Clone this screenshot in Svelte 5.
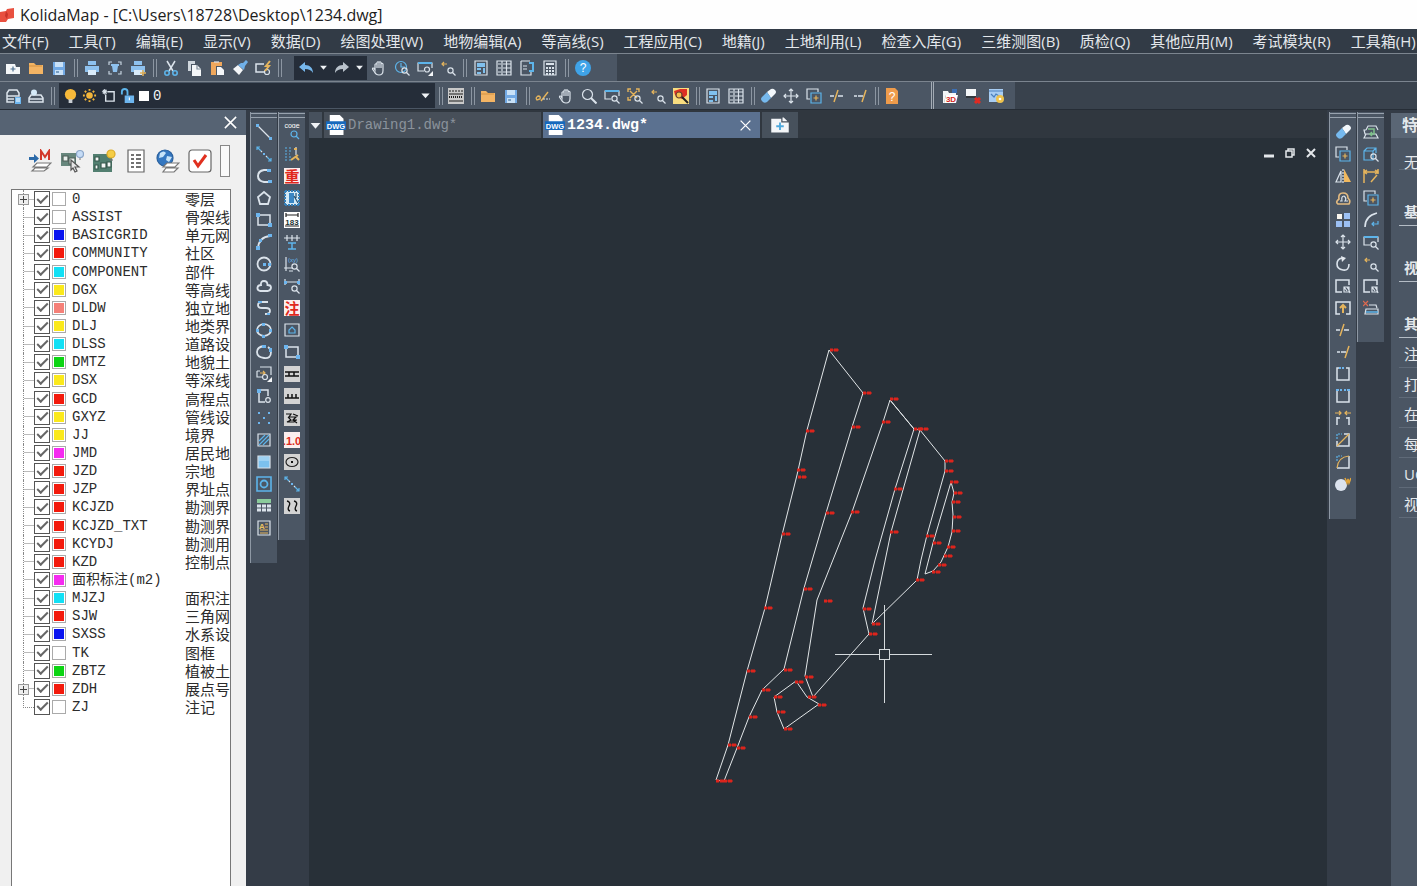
<script>
  const blue = 'stroke="#5db4ea"';
  const gold = 'stroke="#e5b45c"';
  const fillBlue = 'fill="#6db5ee" stroke="none"';
  const fillWhite = 'fill="#f4f6f8" stroke="none"';
  const lens = '<circle cx="10.5" cy="10.5" r="2.6"/><path d="M12.5 12.5L15.5 15.5"/>';
  const printer = '<path fill="#8ec1ee" stroke="none" d="M4 1h8v4H4zM1 6h14v6h-3v-2H4v2H1z"/><path fill="#d9ebfa" stroke="none" d="M4 10h8v5H4z"/>';
  const tile = '<path fill="#d3d3d3" stroke="none" d="M0 0h16v16H0z"/>';
  const redTile = '<path fill="#fbeeee" stroke="none" d="M0 0h16v16H0z"/>';

  // every drawing sits in a 16 x 16 box unless it is one of the layer panel icons
  const icons = {
    new: `<path ${fillWhite} d="M1 4h9l1 3h4V4h-4l4 0v10H1z"/><path stroke="#4d6f8e" d="M8 6.500v5M5.500 9h5"/>`,
    newTab: `<path ${fillWhite} d="M1 3h8v3h6v8H1zM10 2h1l3 3h-4z"/><path stroke="#4fa9dc" stroke-width="1.500" d="M8 6v6M5 9h6"/>`,
    open: '<path fill="#f3b464" stroke="none" d="M1 3h5l2 2h7v9H1z"/><path stroke="#d99849" d="M1 6h13"/>',
    save: '<path fill="#72a9e4" stroke="none" d="M2 2h12v13H2z"/><path fill="#c9e1f7" stroke="none" d="M4 2h8v5H4zM4 10h8v5H4z"/><path stroke="#3e709d" d="M5 12h3"/>',
    print: printer,
    preview: '<path stroke="#c5d3df" d="M2 5V2h3M11 2h3v3M14 11v3h-3M5 14H2v-3"/><path fill="#8ec1ee" stroke="none" d="M4 4h8v2h-1l-1 6H6L5 6H4z"/>',
    plot: printer + `<path ${gold} stroke-width="1.500" d="M13 10v6M10 13h6"/>`,
    cut: `<path stroke-width="1.500" d="M4 1l6 10M12 1L6 11"/><circle ${blue} stroke-width="1.600" cx="4" cy="13" r="2.200"/><circle ${blue} stroke-width="1.600" cx="12" cy="13" r="2.200"/>`,
    copy: `<path fill="#cfd6dd" stroke="none" d="M2 1h7v3H5v7H2z"/><path ${fillWhite} d="M6 5h5l4 4v7H6z"/><path stroke="#7f8c99" d="M11 5v4h4"/>`,
    paste: `<path fill="#efa75c" stroke="none" d="M2 2h11v4H7v9H2z"/><path ${fillWhite} d="M8 7h4l3 3v5H8z"/><path d="M5 2h5"/>`,
    brush: `<path ${fillWhite} d="M1 9l5-4 5 5-4 5z"/><path fill="#70b1ea" stroke="none" d="M6 5l3-2 2 0 3-3 2 2-3 4-1 4z"/>`,
    edit: `<path stroke-width="1.500" d="M9 4H1v8h8"/><circle cx="12" cy="12" r="2.500"/><path ${gold} stroke-width="2" d="M15 1l-4 5h3l-4 5"/>`,
    undo: '<path fill="#76b7ec" stroke="none" d="M1 7l6-5v3c5 0 8 3 8 8-2-3-4-4-8-4v3z"/>',
    redo: '<path fill="#b9c2cb" stroke="none" d="M15 7L9 2v3c-5 0-8 3-8 8 2-3 4-4 8-4v3z"/>',
    down: '<path fill="#f0f3f6" stroke="none" d="M2 5h12l-6 7z"/>',
    hand: '<path d="M4 10V4.500q1-1.500 2 0V8V2.500q1-1.500 2 0V8V2.500q1-1.500 2 0V8V4q1-1.300 2 0v6.500Q12 15 8 15 5 15 3.500 12L1.500 9q0-1.500 1.500-.8z"/>',
    zoomRt: `<circle ${blue} cx="7" cy="7" r="5.500"/><path ${blue} d="M7 3v4h4"/>` + lens,
    zoomWin: `<path d="M7 11H1V3h14v5"/><path ${blue} stroke-width="2" d="M1 3h14"/><circle cx="10" cy="9.500" r="2.500"/><path ${fillWhite} d="M16 11v5h-5z"/>`,
    zoomWin2: `<path d="M7 11H1V3h14v5"/><path ${blue} stroke-width="2" d="M1 3h14"/>` + lens,
    zoomPrev: `<path ${gold} d="M7 4H2M4 2L2 4l2 2"/>` + lens,
    zoomAll: `<path ${gold} stroke-width="1.400" d="M3 3l7 7M10 3l-7 7M1 4V1h3M9 1h3v3M1 9v3h3"/>` + lens,
    palette: '<path d="M2 1h12v14H2z"/><path fill="#80c0ed" stroke="none" d="M4 3h8v4H4zM4 8h4v2H4zM10 8h2v5h-2zM4 12h4v2H4z"/>',
    grid: '<path d="M1 1h14v14H1zM6 1v14M10.500 1v14M2 4h3M2 8h3M2 12h3M7 4h8M7 8h8M7 12h8"/>',
    sheet: `<path d="M2 1h9M2 1v14h10v-3"/><path ${blue} stroke-width="2" d="M10 3h4v8h-4"/><path d="M4 6h4M4 9h4"/>`,
    calc: '<path d="M2 1h12v14H2z"/><path stroke-width="2" d="M4 4h8"/><path stroke-width="2" stroke-dasharray="2 1" d="M4 8h8M4 11h8M4 14h8"/>',
    help: '<circle fill="#3fa3e8" stroke="none" cx="8" cy="8" r="8"/><text x="8" y="12" font-size="12" text-anchor="middle" fill="#fff" stroke="none">?</text>',
    layers: `<path stroke-width="1.500" d="M2 5l2-3h8l2 3v3H2zM2 8v3h7M2 11v3h7"/><path ${fillBlue} d="M10 9h6v7h-6z"/><path stroke="#fff" d="M11 11h4M11 13h4"/>`,
    layerPrev: `<path stroke-width="1.500" d="M3 7h10l2 3v4H1v-4zM1 11h14"/><circle fill="#d5e9f7" stroke="none" cx="6" cy="4.500" r="3"/>`,
    linetype: '<path fill="#c9c9c9" stroke="none" d="M0 0h16v16H0z"/><path stroke="#1d1d1d" stroke-dasharray="2 1" d="M1 3h14"/><path stroke="#1d1d1d" d="M1 6h14M1 13h14"/><path stroke="#1d1d1d" stroke-dasharray="1 1" stroke-width="2" d="M1 9h14"/>',
    snap: `<path ${gold} stroke-width="1.400" d="M6 13L13 4M2 12q-2-2 1-4 3 0 2 3z"/><path stroke-dasharray="2 1" d="M8 11h7"/>`,
    zoom: '<circle cx="6.500" cy="6.500" r="5"/><path stroke-width="2" d="M10 10l5.500 5.500"/>',
    zoomMap: '<path fill="#f8dd80" stroke="none" d="M0 0h16v16H0z"/><path fill="#dd3024" stroke="none" d="M1 3l6-2 7 0 0 6-5 4-7-4z"/><circle fill="#f6c14d" stroke="#6b4030" cx="6" cy="7" r="3"/><path stroke="#222" stroke-width="2" d="M9 9l6 6"/>',
    eraser: '<path fill="#f2f7fb" stroke="none" d="M7 4l4-3q2-1 4 1t0 4l-4 4z"/><path fill="#76b9ee" stroke="none" d="M7 4L2 9q-2 2 0 4 2 3 5 1l4-4z"/>',
    move: '<path d="M8 1v14M1 8h14M6 3l2-2 2 2M6 13l2 2 2-2M3 6L1 8l2 2M13 6l2 2-2 2"/>',
    copyObj: `<path d="M4 11H1V1h11v3"/><path ${blue} d="M5 5h10v10H5z"/><path ${gold} d="M10 7.500v5M7.500 10h5"/>`,
    trim: `<path ${gold} stroke-width="1.500" d="M5 14L9 2"/><path stroke-width="1.500" d="M1 8h4M9 8h5"/>`,
    extend: `<path ${gold} stroke-width="1.500" d="M10 14l4-12"/><path stroke-width="1.500" d="M2 8h3M6 8h5"/>`,
    helpDoc: '<path fill="#ee9b4b" stroke="none" d="M2 0h9l3 3v13H2z"/><text x="8" y="13" font-size="12" text-anchor="middle" fill="#fff" stroke="none">?</text>',
    open3d: `<path ${fillWhite} d="M1 3h5l1 2h7v2H4l-2 8H1z"/><path fill="#3c6fb3" stroke="none" d="M10 1h5v4h-5z"/><path fill="#fff" stroke="none" d="M4 7h12l-2 8H2z"/><text x="9" y="14" font-size="8" font-weight="bold" text-anchor="middle" fill="#d4271e" stroke="none">3D</text>`,
    close3d: `<path ${fillWhite} d="M1 1h10v7H1z"/><path stroke="#222" d="M1 9h10"/><path stroke="#e02a22" stroke-width="3" d="M10 10l5 5M15 10l-5 5"/>`,
    set3d: '<path fill="#a8cdf3" stroke="none" d="M1 1h14v13H1z"/><path stroke="#4b80bd" d="M1 3h14M3 6l3 3 2-3 3 2"/><circle fill="#efc34e" stroke="none" cx="12" cy="11" r="4"/><circle fill="#fff" stroke="none" cx="12" cy="11" r="1.300"/>',
    bulb: '<circle fill="#f6b93a" stroke="none" cx="8" cy="7" r="6"/><path fill="#c9ced3" stroke="none" d="M6 12h4v4H6z"/>',
    sun: '<circle fill="#f2b53a" stroke="none" cx="8" cy="8" r="3.500"/><path stroke="#f2b53a" stroke-width="2" d="M8 1v2M8 13v2M1 8h2M13 8h2M3 3l1.500 1.500M11.500 11.500L13 13M13 3l-1.500 1.500M3 13l1.500-1.500"/>',
    frame: '<path stroke-width="1.500" d="M7 4h7v10H5V7"/><path d="M4 1v6M1 4h6M2 2l4 4M6 2L2 6"/>',
    lock: `<path ${blue} stroke-width="2" d="M2 7V4q0-3 3-3t3 3v4"/><path ${fillBlue} d="M5 8h10v8H5z"/><path stroke="#fff" d="M10 10v3"/>`,
    line: `<path d="M2 2l12 12"/><path ${fillBlue} d="M0 0h3v3H0zM13 13h3v3h-3z"/>`,
    xline: `<path ${blue} d="M1 1l4 4M11 11l4 4M1 4V1h3M15 12v3h-3"/><path d="M5 5l1 1M10 10l1 1"/><path ${fillBlue} d="M7 7h2v2H7z"/>`,
    pline: `<path stroke-width="2" d="M13 2H8Q2 3 2 8t6 6h5"/><path ${fillBlue} d="M11 1h4v3h-4zM12 12h4v3h-4z"/>`,
    polygon: '<path stroke-width="1.800" d="M8 2l6 5-2 7H4L2 7z"/>',
    rect: `<path stroke-width="1.500" d="M2 3h12v10H2z"/><path ${fillBlue} d="M0 1h4v4H0zM12 11h4v4h-4z"/>`,
    arc: `<path stroke-width="1.800" d="M2 14Q3 3 14 2"/><path ${fillBlue} d="M0 12h4v4H0zM3 5h3v3H3zM12 0h4v3h-4z"/>`,
    circle: `<circle stroke-width="1.800" cx="8" cy="8" r="6.500"/><path ${fillBlue} d="M7 7h3v3H7zM12 7h3v3h-3z"/>`,
    cloud: '<path stroke-width="1.800" d="M4 13q-3-1-2.500-3.500T5 7q-.500-4 3-4t3.500 4q3.500 0 3.500 2.500T12 13z"/>',
    spline: `<path stroke-width="1.800" d="M12 2H6Q2 2 2 5t4 3h4q4 0 4 3t-5 3"/><path ${fillBlue} d="M2 1h4v2H2zM11 13h3v2h-3z"/>`,
    ellipse: `<ellipse stroke-width="1.800" cx="8" cy="8" rx="7" ry="5.800"/><path ${fillBlue} d="M6 1h3v3H6zM6 13h3v3H6zM0 7h3v3H0zM13 7h3v3h-3z"/>`,
    ellArc: `<path stroke-width="1.800" d="M8 2Q1 3 1 8t7 6 7-6q0-3-3-5"/><path ${fillBlue} d="M6 1h4v3H6zM13 4h3v4h-3z"/>`,
    insert: `<path d="M4 1h11v8M1 5v6h5M1 5h3"/><path ${gold} d="M4 7h5M7 5l2 2-2 2"/><circle cx="9" cy="11" r="2.500"/><path ${fillWhite} d="M16 11v5h-5z"/>`,
    block: `<path stroke-width="1.500" d="M3 3v11h6M5 2h7v6"/><path ${fillBlue} d="M1 1h4v4H1z"/><circle cx="12" cy="12" r="2.300"/>`,
    points: `<path ${fillBlue} d="M2 2h2v2H2zM12 2h2v2h-2zM7 7h2v2H7zM2 12h2v2H2zM12 12h2v2h-2z"/>`,
    hatch: `<path d="M2 2h12v12H2z"/><path ${blue} d="M3 9l6-6M3 13L13 3M7 13l6-6"/>`,
    gradient: '<path fill="#7cc1ee" d="M2 2h12v12H2z"/><path stroke="#bfe3f8" d="M3 4h10M3 6h10"/>',
    region: `<path ${blue} stroke-width="1.600" d="M1 1h14v14H1z"/><circle ${blue} stroke-width="1.800" cx="8" cy="8" r="3.500"/>`,
    table: '<path fill="#8acb9b" stroke="none" d="M1 1h14v4H1z"/><path stroke-width="3" stroke-dasharray="4 1" d="M1 8h14M1 12h14"/>',
    mtext: `<path d="M2 1h12v14H2z"/><text x="3" y="9" font-size="8" font-weight="bold" fill="#e9c05f" stroke="none">A</text><path ${gold} d="M9 4h3M9 7h3M4 10h8M4 13h8"/>`,
    code: `<text x="8" y="4" font-size="7" text-anchor="middle" fill="#fff" stroke="none">code</text><circle ${blue} cx="10" cy="10" r="3"/><path ${blue} d="M12 12l3 3"/>`,
    codeEdit: `<path ${blue} stroke-dasharray="2 2" d="M1 2h6M1 5h8M1 8h5M1 11h6M1 14h7"/><path d="M12 1v8"/><path ${gold} stroke-width="2" d="M7 14l7-5M12 11l3 3M10 3h3"/>`,
    zhong: redTile + '<text x="8" y="14" font-size="15" font-weight="bold" text-anchor="middle" fill="#e0271c" stroke="none">重</text>',
    select: '<path fill="#d3e9f6" stroke="none" d="M1 1h14v14H1z"/><path stroke="#357fb8" stroke-dasharray="2 1" stroke-width="2" d="M1 1v14M15 1v14M1 1h14M1 15h14"/><path fill="#3a86c3" stroke="none" d="M5 3h5v10H5zM10 9l4 5"/><path stroke="#26506f" d="M10 6l4 7M12 3v5"/>',
    digits: '<path fill="#fff" stroke="none" d="M0 0h16v16H0z"/><path stroke="#222" d="M2 3h12M2 1v4M14 1v4M1 14h14"/><text x="8" y="13" font-size="8" font-weight="bold" text-anchor="middle" fill="#233" stroke="none">183</text>',
    fence: `<path d="M0 4h16M3 1v6M8 1v6M13 1v6"/><path ${blue} stroke-width="1.500" d="M4 9h8M8 9v6M4 15h8"/>`,
    xy: `<path d="M2 1v14M0 12h9M5 15h4"/><text x="4" y="6" font-size="6" fill="#69bdf0" stroke="none">(xy)</text>` + lens,
    measure: `<path d="M1 1v6M15 1v6M1 4h14"/><path ${fillBlue} d="M0 3h3v3H0zM13 3h3v3h-3z"/>` + lens,
    zhu: redTile + '<text x="8" y="14" font-size="15" font-weight="bold" text-anchor="middle" fill="#e0271c" stroke="none">注</text>',
    house: `<path d="M1 2h14v12H1z"/><path ${blue} d="M8 5l3 3v3H5V8z"/>`,
    rail: tile + '<path stroke="#111" stroke-width="1.500" d="M1 6h14M1 10h14M5 6v4M10 6v4"/>',
    wall: tile + '<path stroke="#111" stroke-width="1.500" d="M1 10h14M4 6v4M8 6v4M12 6v4"/>',
    cliff: tile + '<path stroke="#111" stroke-width="1.200" d="M2 4h5l-2 3h7l-3 3h4M4 7l3 3-4 2h7l2-2M9 4l5 2M9 10l4 3"/>',
    elev: redTile + '<text x="8" y="13" font-size="11" font-weight="bold" text-anchor="middle" fill="#dc2b20" stroke="none">.1.0</text>',
    contour: tile + '<ellipse stroke="#222" cx="8" cy="8" rx="6" ry="4.500"/><path fill="#111" stroke="none" d="M7 7h2v2H7z"/>',
    break: tile + '<path stroke="#111" stroke-width="1.400" d="M3 3q4 1 2 5t1 5M10 3q4 1 2 5t1 5"/>',
    mirror: '<path fill="#f0b85e" stroke="none" d="M9 1l7 13H9z"/><path d="M6 3v11H1z"/><path stroke-dasharray="2 1" d="M8 1v14"/>',
    offset: '<path stroke="#e3ba80" stroke-width="1.600" d="M3 14q-3-2 1-5-1-6 4-6t5 5q3 3 1 6z"/><path d="M5 11h2q-1-5 2-5 3 2 1 5h3"/>',
    array: '<path fill="#f8f4ed" stroke="none" d="M2 2h5v5H2z"/><path fill="#9cc0f4" stroke="none" d="M9 1h6v6H9zM1 9h6v6H1zM9 9h6v6H9z"/>',
    rotate: '<path stroke-width="1.600" d="M7 2Q2 3 2 8t6 6 6-6"/><path fill="#e3e8ee" stroke="none" d="M6 0l5 2-4 4z"/>',
    scale: '<path stroke-width="1.500" d="M7 14H1V2h13v5"/><path d="M9 9h5v5H9zM12 9q2 2 3 6M9 9l3 4"/>',
    stretch: `<path stroke-width="1.500" d="M5 14H1V2h14v12h-4"/><path ${gold} stroke-width="2" d="M8 13V6M5 8l3-3 3 3"/>`,
    breakPt: `<path stroke-width="1.500" d="M5 2H2v12h12V2h-3"/><path ${fillBlue} d="M7 1h2v2H7zM4 1h2v2H4z"/>`,
    breakTwo: `<path stroke-width="1.500" d="M2 3v11h12V3"/><path ${fillBlue} d="M1 1h3v2H1zM5 1h2v2H5zM9 1h2v2H9zM12 1h3v2h-3z"/>`,
    join: `<path stroke-width="1.500" d="M2 7v8M14 7v8M2 8h3M14 8h-3"/><path ${gold} d="M0 3h6M4 1l2 2-2 2M16 3h-6M12 1l-2 2 2 2"/>`,
    chamfer: `<path stroke-width="1.500" d="M2 9v5h12V2H9"/><path ${blue} stroke-dasharray="2 1" d="M2 7V2h5"/><path ${gold} d="M2 14L14 2"/>`,
    fillet: `<path stroke-width="1.500" d="M2 14h12V2"/><path ${blue} stroke-dasharray="2 1" d="M2 7V2h5"/><path ${gold} d="M2 14Q3 3 14 2"/>`,
    explode: '<circle fill="#dce3ee" stroke="none" cx="6" cy="9" r="6"/><path stroke="#e2a53b" stroke-width="1.500" d="M10 2l2 5 1-4 1 4 2-5"/>',
    layerMatch: '<path d="M3 6l2-4h8l2 4M3 6H1l1 4h3M1 14l2-4h10l2 4z"/><path stroke="#7fc18b" stroke-width="1.500" d="M5 5h6v5H7M9 8l-2 2 2 2"/>',
    boxZoom: `<path ${blue} d="M1 5h9v9H1zM1 5l3-3h9v5M10 5l3-3"/>` + lens,
    dim: `<path ${gold} stroke-width="1.500" d="M1 1v14M15 1v5M1 4h14M4 2L1 4l3 2M12 2l3 2-3 2M8 14l6-7"/>`,
    arcTurn: `<path stroke-width="1.600" d="M2 15Q2 4 14 1"/><path ${blue} d="M15 9v3H9M11 10l-2 2 2 2"/>`,
    layerDel: `<path d="M6 5h7l1 3M3 9h12v5H2z"/><path ${blue} stroke-width="1.500" d="M3 12h12"/><path stroke="#e06a4f" d="M0 1l5 5M5 1L0 6"/>`,
    dwg: '<path fill="#fff" stroke="none" d="M3 0h8l3 3v13H3z"/><path fill="#1669bd" stroke="none" d="M0 5h16v7H0z"/><text x="8" y="11" font-size="6" font-weight="bold" text-anchor="middle" fill="#fff" stroke="none">DWG</text>',
    close: '<path stroke="#fff" stroke-width="1.600" d="M2 2l12 12M14 2L2 14"/>',
    mModel: '<path fill="#2b6aa9" stroke="none" d="M1 8h5V5l5 4.500L6 14v-3H1z"/><path stroke="#d2392b" stroke-width="2" d="M13 11V2l4 6 4-6v9"/><path fill="#fff" stroke="#777" d="M9 14h14l-4 4H5zM7 19h13l-4 3H4z"/>',
    mPick: '<path fill="#67877d" stroke="none" d="M1 4h15v13H1z"/><path fill="#e8efec" stroke="#4e5f59" d="M3 7h5v5H3zM9 9h6v6H9z"/><path fill="#e6e6e6" stroke="#555" d="M11 11l8 7-4 0 2 4-2 1-2-4-2 2z"/><circle fill="#c6dcf6" stroke="#8ba6c9" cx="20" cy="5" r="3.500"/><path stroke="#777" d="M19 10h2"/>',
    mLight: '<path fill="#527f70" stroke="none" d="M1 5h19v18H1z"/><path fill="#f5f7f6" stroke="#37584d" d="M3 8h4v4H3zM9 14h5v5H9zM15 13h4v5h-4zM3 16h3v4H3z"/><circle fill="#f5cd45" stroke="#dbaa28" cx="19" cy="5" r="4"/><path stroke="#777" d="M18 11h3"/>',
    mList: '<path fill="#fff" stroke="#666" d="M4 1h16v22H4z"/><path stroke="#444" stroke-width="1.500" d="M7 6h3M7 10h3M7 14h3M7 18h3M12 6h5M12 10h5M12 14h5M12 18h5"/>',
    mGlobe: '<circle fill="#3477c0" stroke="#2b619d" cx="9" cy="9" r="8"/><path fill="#c6e3f8" stroke="none" d="M4 4q4-3 6 0l-3 4-4 1zM11 7l5 1-3 5-3-2z"/><path fill="#fff" stroke="#777" d="M11 14h12l-4 4H7zM10 19h12l-4 4H7z"/>',
    mCheck: '<rect fill="#fff" stroke="#666" x="1" y="1" width="22" height="22" rx="3"/><path stroke="#e0301f" stroke-width="3" d="M6 11l4 6 8-11"/>'
  };

  const menus = ['文件(F)', '工具(T)', '编辑(E)', '显示(V)', '数据(D)', '绘图处理(W)', '地物编辑(A)', '等高线(S)', '工程应用(C)', '地籍(J)', '土地利用(L)', '检查入库(G)', '三维测图(B)', '质检(Q)', '其他应用(M)', '考试模块(R)', '工具箱(H)'];

  const fileTools = ['new', 'open', 'save', '|', 'print', 'preview', 'plot', '|', 'cut', 'copy', 'paste', 'brush', 'edit', '|'];
  const viewTools = ['hand', 'zoomRt', 'zoomWin', 'zoomPrev', '|', 'palette', 'grid', 'sheet', 'calc', '|', 'help'];
  const layerTools = ['layers', 'layerPrev', '|'];
  const editTools = ['|', 'linetype', '|', 'open', 'save', '|', 'snap', 'hand', 'zoom', 'zoomWin2', 'zoomAll', 'zoomPrev', 'zoomMap', '|', 'palette', 'grid', '|', 'eraser', 'move', 'copyObj', 'trim', 'extend', '|', 'helpDoc'];
  const modelTools = ['open3d', 'close3d', 'set3d'];

  const drawTools = ['line', 'xline', 'pline', 'polygon', 'rect', 'arc', 'circle', 'cloud', 'spline', 'ellipse', 'ellArc', 'insert', 'block', 'points', 'hatch', 'gradient', 'region', 'table', 'mtext'];
  const surveyTools = ['code', 'codeEdit', 'zhong', 'select', 'digits', 'fence', 'xy', 'measure', 'zhu', 'house', 'rect', 'rail', 'wall', 'cliff', 'elev', 'contour', 'xline', 'break'];
  const modifyTools = ['eraser', 'copyObj', 'mirror', 'offset', 'array', 'move', 'rotate', 'scale', 'stretch', 'trim', 'extend', 'breakPt', 'breakTwo', 'join', 'chamfer', 'fillet', 'explode'];
  const extraTools = ['layerMatch', 'boxZoom', 'dim', 'copyObj', 'arcTurn', 'zoomWin2', 'zoomPrev', 'scale', 'layerDel'];

  const white = '#ffffff';
  const navy = '#0a14f0';
  const red = '#f31a0c';
  const cyan = '#12e0f5';
  const yellow = '#fbe91c';
  const green = '#0cd413';
  const pink = '#f52bf0';

  let layers = $state([
    { name: '0', note: '零层', color: white, on: true, parent: true },
    { name: 'ASSIST', note: '骨架线', color: white, on: true },
    { name: 'BASICGRID', note: '单元网', color: navy, on: true },
    { name: 'COMMUNITY', note: '社区', color: red, on: true },
    { name: 'COMPONENT', note: '部件', color: cyan, on: true },
    { name: 'DGX', note: '等高线', color: yellow, on: true },
    { name: 'DLDW', note: '独立地', color: '#f58078', on: true },
    { name: 'DLJ', note: '地类界', color: yellow, on: true },
    { name: 'DLSS', note: '道路设', color: cyan, on: true },
    { name: 'DMTZ', note: '地貌土', color: green, on: true },
    { name: 'DSX', note: '等深线', color: yellow, on: true },
    { name: 'GCD', note: '高程点', color: red, on: true },
    { name: 'GXYZ', note: '管线设', color: yellow, on: true },
    { name: 'JJ', note: '境界', color: yellow, on: true },
    { name: 'JMD', note: '居民地', color: pink, on: true },
    { name: 'JZD', note: '宗地', color: red, on: true },
    { name: 'JZP', note: '界址点', color: red, on: true },
    { name: 'KCJZD', note: '勘测界', color: red, on: true },
    { name: 'KCJZD_TXT', note: '勘测界', color: red, on: true },
    { name: 'KCYDJ', note: '勘测用', color: red, on: true },
    { name: 'KZD', note: '控制点', color: red, on: true },
    { name: '面积标注(m2)', note: '', color: pink, on: true },
    { name: 'MJZJ', note: '面积注', color: cyan, on: true },
    { name: 'SJW', note: '三角网', color: red, on: true },
    { name: 'SXSS', note: '水系设', color: navy, on: true },
    { name: 'TK', note: '图框', color: white, on: true },
    { name: 'ZBTZ', note: '植被土', color: green, on: true },
    { name: 'ZDH', note: '展点号', color: red, on: true, parent: true },
    { name: 'ZJ', note: '注记', color: white, on: true }
  ]);

  const parcels = [
    '829,350 807,430 797,475 782,535 765,608 747,671 728,745 716,780 724,781 737,748 749,717 762,690 784,669 804,588 826,513 852,427 863,393',
    '890,400 883,422 852,512 817,600 805,676 813,697 869,634 863,608 875,560 895,489 914,429',
    '920,430 891,532 872,624 917,580 921,560 927,535 945,471 945,461',
    '951,482 933,543 925,574 933,571 941,562 948,547 952,532 953,515 952,502 954,493',
    '796,681 807,697 819,704 784,729 777,712 774,697'
  ];
  const joints = 'M890 400l24 29M914 429l6 1';

  const marks = [
    [830, 350], [863, 393], [806, 431], [852, 427], [797, 470], [798, 477], [782, 534], [826, 513],
    [851, 512], [882, 422], [890, 399], [914, 429], [920, 429], [894, 489], [890, 532], [945, 461],
    [945, 471], [950, 482], [954, 493], [952, 502], [953, 517], [952, 531], [926, 536], [933, 543],
    [947, 547], [944, 556], [938, 565], [932, 572], [916, 580], [863, 609], [872, 624], [869, 634],
    [824, 601], [804, 589], [805, 677], [784, 670], [764, 608], [747, 671], [762, 690], [749, 717],
    [774, 697], [777, 712], [795, 682], [808, 697], [818, 705], [784, 729], [728, 745], [737, 748],
    [716, 781], [724, 781]
  ];

  const properties = ['注', '打', '在', '每', 'U', '视'];
</script>

{#snippet icon(name, size = 16, box = 16)}
  <svg class="icon" width={size} height={size} viewBox="0 0 {box} {box}" aria-hidden="true">
    {@html icons[name]}
  </svg>
{/snippet}

{#snippet tools(names)}
  {#each names as name}
    {#if name === '|'}
      <span class="sep"></span>
    {:else}
      <button class="tool" aria-label={name}>{@render icon(name)}</button>
    {/if}
  {/each}
{/snippet}

{#snippet dock(names)}
  <div class="dock">
    <div class="grip"></div>
    {@render tools(names)}
  </div>
{/snippet}

<div class="app">
  <header class="title">
    <svg width="15" height="16" viewBox="0 0 15 16" aria-hidden="true">
      <path fill="#e8503f" d="M0 5l6-1 1-2 7-1v10l-6 1-2 3H0z" />
      <path fill="#c73429" d="M6 4l2 3-1 5-2-3z" />
    </svg>
    <span>KolidaMap - [C:\Users\18728\Desktop\1234.dwg]</span>
  </header>

  <nav class="menu">
    {#each menus as item}
      <button>{item}</button>
    {/each}
  </nav>

  <div class="bar-row">
    <div class="bar">
      {@render tools(fileTools)}
      <div class="history">
        <button class="tool" aria-label="undo">{@render icon('undo')}</button>
        <button class="drop" aria-label="undo list">{@render icon('down', 9)}</button>
        <button class="tool" aria-label="redo">{@render icon('redo')}</button>
        <button class="drop" aria-label="redo list">{@render icon('down', 9)}</button>
      </div>
      {@render tools(viewTools)}
    </div>
  </div>

  <div class="bar-row">
    <div class="bar narrow">
      {@render tools(layerTools)}
      <div class="layer-box">
        {@render icon('bulb', 15)}
        {@render icon('sun', 15)}
        {@render icon('frame', 15)}
        {@render icon('lock', 15)}
        <span class="white-box"></span>
        <select aria-label="layer">
          <option>0</option>
        </select>
        {@render icon('down', 11)}
      </div>
      {@render tools(editTools)}
    </div>
    <div class="bar model">
      {@render tools(modelTools)}
    </div>
  </div>

  <main>
    <aside class="layers">
      <div class="layers-head">
        <button aria-label="close panel">{@render icon('close', 15)}</button>
      </div>
      <div class="layers-tools">
        {#each ['mModel', 'mPick', 'mLight', 'mList', 'mGlobe', 'mCheck'] as name}
          <button aria-label={name}>{@render icon(name, 24, 24)}</button>
        {/each}
        <span class="cut-box"></span>
      </div>
      <div class="tree-box">
        <div class="tree">
          {#each layers as layer, i}
            <label class="row" class:last={i === layers.length - 1}>
              <span class="branch">
                {#if layer.parent}<span class="plus"></span>{/if}
              </span>
              <input type="checkbox" bind:checked={layer.on} />
              <span class="swatch"><span style="background: {layer.color}"></span></span>
              <span class="name">{layer.name}</span>
              <span class="note">{layer.note}</span>
            </label>
          {/each}
        </div>
      </div>
    </aside>

    <div class="docks">
      {@render dock(drawTools)}
      {@render dock(surveyTools)}
    </div>

    <section class="doc">
      <div class="tabs">
        <button class="tab-list" aria-label="drawings">{@render icon('down', 13)}</button>
        <button class="tab">{@render icon('dwg', 20)}<span>Drawing1.dwg*</span></button>
        <div class="tab active">
          <button>{@render icon('dwg', 20)}<span>1234.dwg*</span></button>
          <button aria-label="close drawing">{@render icon('close', 13)}</button>
        </div>
        <button class="tab-new" aria-label="new drawing">{@render icon('newTab', 20)}</button>
      </div>
      <div class="canvas">
        <svg class="plan" width="100%" height="100%">
          <g transform="translate(-309 -138)">
            {#each parcels as points}
              <polygon {points} />
            {/each}
            <path d={joints} />
            {#each marks as [x, y]}
              <path class="mark" d="M{x} {y}h3M{x + 4} {y}h4" />
              <path class="mark thin" d="M{x} {y}h9" />
            {/each}
            <path class="cross" d="M835 654H879M889 654H932M884 605V649M884 659V703M879 649h10v10h-10z" />
          </g>
        </svg>
        <div class="window-buttons">
          <button aria-label="minimize">
            <svg width="12" height="12"><path d="M1 9h10" stroke-width="3" /></svg>
          </button>
          <button aria-label="restore">
            <svg width="12" height="12"><path d="M2 4h6v6H2zM4 4V2h6v6H8" stroke-width="1.500" /></svg>
          </button>
          <button aria-label="close window">
            <svg width="12" height="12"><path d="M2 2l8 8M10 2l-8 8" stroke-width="2" /></svg>
          </button>
        </div>
      </div>
    </section>

    <div class="docks right">
      {@render dock(modifyTools)}
      {@render dock(extraTools)}
    </div>

    <aside class="props">
      <h2>特</h2>
      <p class="none">无</p>
      <h3>基</h3>
      <h3>视</h3>
      <h3>其</h3>
      {#each properties as item}
        <p>{item}{#if item === 'U'}C{/if}</p>
      {/each}
    </aside>
  </main>
</div>

<style>
  :global(body) {
    margin: 0;
    background: #39424d;
  }

  .app {
    height: 100vh;
    display: flex;
    flex-direction: column;
    overflow: hidden;
    font-family: "Open Sans", "Noto Sans CJK SC", sans-serif;
    color: #e4e8ec;
  }

  button {
    display: flex;
    align-items: center;
    justify-content: center;
    padding: 0;
    border: none;
    background: none;
    color: inherit;
    font: inherit;
    white-space: nowrap;
  }

  .icon {
    display: block;
    flex: none;
    fill: none;
    stroke: #dbe3eb;
    stroke-width: 1.2;
    font-family: "Liberation Sans", "Noto Sans CJK SC", sans-serif;
  }

  .title {
    flex: none;
    height: 29px;
    display: flex;
    align-items: center;
    gap: 5px;
    background: #fefefe;
    color: #1c1c1c;
    font-size: 16px;
  }

  .menu {
    flex: none;
    height: 24px;
    display: flex;
    gap: 20px;
    padding-left: 2px;
    background: #323b46;
    border-bottom: 1px solid #7c858f;
    font-size: 15px;
    line-height: 24px;
    overflow: hidden;
  }

  .bar-row {
    flex: none;
    height: 27px;
    display: flex;
    background: #39424d;
    border-bottom: 1px solid #7b848f;
  }

  .bar-row + .bar-row {
    border-bottom-color: #262d36;
  }

  .bar {
    display: flex;
    align-items: center;
    padding: 0 23px 0 1px;
    background: #4b5664;
  }

  .narrow {
    padding-right: 28px;
  }

  .tool {
    width: 23px;
    height: 22px;
    flex: none;
  }

  .sep {
    width: 10px;
    height: 18px;
    flex: none;
    background: linear-gradient(90deg, transparent 4px, #8c96a2 4px, #8c96a2 5px, transparent 5px, transparent 7px, #8c96a2 7px, #8c96a2 8px, transparent 8px);
  }

  .narrow .sep {
    width: 9px;
  }

  .history {
    height: 24px;
    width: 73px;
    margin: 0 0 0 10px;
    display: flex;
    align-items: center;
    background: #252d39;
  }

  .drop {
    width: 13px;
    height: 22px;
  }

  .layer-box {
    width: 376px;
    height: 25px;
    margin-left: 3px;
    padding: 0 4px;
    box-sizing: border-box;
    display: flex;
    align-items: center;
    gap: 4px;
    background: #252d39;
  }

  .white-box {
    width: 10px;
    height: 10px;
    background: #fff;
  }

  .layer-box select {
    flex: 1;
    appearance: none;
    border: none;
    padding: 0;
    background: transparent;
    color: #f2f4f6;
    font: 14px "Liberation Mono", monospace;
  }

  .model {
    padding: 0 8px 0 4px;
    border-left: 3px double #a3abb5;
  }

  main {
    flex: 1;
    min-height: 0;
    display: flex;
    background: #343c47;
  }

  .layers {
    width: 246px;
    flex: none;
    margin-right: 4px;
    display: flex;
    flex-direction: column;
    background: #f0f0f0;
    overflow: hidden;
  }

  .layers-head {
    flex: none;
    height: 25px;
    padding-right: 8px;
    display: flex;
    justify-content: flex-end;
    background: #566373;
  }

  .layers-tools {
    flex: none;
    height: 52px;
    padding: 0 16px 0 28px;
    display: flex;
    align-items: center;
    gap: 8px;
  }

  .cut-box {
    flex: 1;
    height: 30px;
    border: 1px solid #888;
    background: #fafafa;
  }

  .tree-box {
    flex: 1;
    margin: 2px 15px 0 11px;
    border: 1px solid #777;
    border-bottom: none;
    background: #fff;
    color: #2c2c2c;
    overflow: hidden;
  }

  .tree {
    height: 526px;
    display: grid;
    grid-auto-rows: 1fr;
  }

  .row {
    display: flex;
    align-items: center;
    font-family: "Liberation Mono", "Noto Sans CJK SC", monospace;
    font-size: 14px;
    line-height: 18px;
    white-space: nowrap;
  }

  .branch {
    position: relative;
    align-self: stretch;
    width: 10px;
    margin-left: 11px;
    border-left: 1px dotted #888;
    background: linear-gradient(#bbb, #bbb) 0 50% / 100% 1px no-repeat;
  }

  .last .branch {
    align-self: flex-start;
    height: 9px;
    border-bottom: 1px dotted #888;
    background: none;
  }

  .plus {
    position: absolute;
    left: -6px;
    top: 4px;
    width: 9px;
    height: 9px;
    border: 1px solid #999;
    background: linear-gradient(#444, #444) 50% 50% / 7px 1px no-repeat, linear-gradient(#444, #444) 50% 50% / 1px 7px no-repeat, #eee;
  }

  .row input {
    appearance: none;
    flex: none;
    width: 16px;
    height: 16px;
    margin: 0;
    border: 1px solid #555;
    background: #fff;
    display: grid;
    place-items: center;
  }

  .row input:checked::before {
    content: "";
    width: 9px;
    height: 4px;
    margin-bottom: 3px;
    border: solid #666;
    border-width: 0 0 2px 2px;
    box-sizing: content-box;
    transform: rotate(-45deg);
  }

  .swatch {
    flex: none;
    width: 10px;
    height: 10px;
    margin: 0 6px 0 2px;
    padding: 1px;
    border: 1px solid #aaa;
  }

  .swatch span {
    display: block;
    height: 100%;
  }

  .name {
    width: 113px;
    flex: none;
  }

  .note {
    font-family: "Noto Sans CJK SC", sans-serif;
    font-size: 15px;
  }

  .docks {
    flex: none;
    display: flex;
    align-items: flex-start;
    gap: 1px;
    padding: 2px 2px 0 0;
  }

  .dock {
    width: 27px;
    padding-bottom: 24px;
    box-sizing: border-box;
    display: flex;
    flex-direction: column;
    border-left: 1px solid #8e98a4;
    background: #4b5664;
  }

  .dock:nth-child(2) {
    padding-bottom: 23px;
  }

  .dock .tool {
    width: 100%;
  }

  .grip {
    height: 3px;
    margin: 1px 0 3px;
    border-top: 1px solid #98a2ae;
    border-bottom: 1px solid #98a2ae;
  }

  .doc {
    flex: 1;
    min-width: 0;
    margin-left: 2px;
    display: flex;
    flex-direction: column;
    background: #283038;
  }

  .tabs {
    flex: none;
    height: 26px;
    padding-top: 2px;
    display: flex;
    gap: 2px;
    background: #30373f;
    font-family: "Liberation Mono", monospace;
    font-size: 14px;
  }

  .tab-list {
    width: 13px;
    background: #47515d;
    overflow: hidden;
  }

  .tab {
    width: 217px;
    padding: 0 2px;
    box-sizing: border-box;
    justify-content: flex-start;
    background: #474f59;
    color: #8b939c;
  }

  .tab span {
    margin-left: 2px;
  }

  .active {
    display: flex;
    justify-content: space-between;
    padding-right: 8px;
    background: #5b7190;
    color: #fff;
    font-size: 15px;
    font-weight: bold;
  }

  .tab-new {
    width: 36px;
    background: #47515c;
  }

  .canvas {
    position: relative;
    flex: 1;
    min-height: 0;
    background: #283038;
  }

  .plan {
    display: block;
    position: absolute;
    inset: 0;
    fill: none;
    stroke: #e2e6e8;
    stroke-width: 1;
  }

  .mark {
    stroke: #dc241c;
    stroke-width: 3;
  }

  .thin {
    stroke-width: 1;
  }

  .cross {
    stroke: #d5dadd;
    shape-rendering: crispEdges;
  }

  .window-buttons {
    position: absolute;
    top: 9px;
    right: 10px;
    display: flex;
    gap: 9px;
  }

  .window-buttons svg {
    display: block;
    fill: none;
    stroke: #e4e7ea;
  }

  .right {
    padding: 2px 7px 0 2px;
  }

  .props {
    flex: none;
    width: 26px;
    margin-top: 3px;
    box-sizing: border-box;
    background: #4b5664;
    overflow: hidden;
    font-size: 15px;
    white-space: nowrap;
  }

  .props h2 {
    height: 25px;
    margin: 0;
    padding-left: 11px;
    background: #5a6675;
    font-size: 16px;
    line-height: 25px;
  }

  .props h3 {
    height: 24px;
    margin: 31px 0 0 8px;
    padding-left: 5px;
    border-bottom: 1px solid #b4bcc5;
    font-size: 14px;
    line-height: 22px;
  }

  .props p {
    height: 29px;
    margin: 0 0 0 8px;
    padding-left: 5px;
    border-bottom: 1px solid #5f6a78;
    line-height: 32px;
  }

  .props .none {
    height: 31px;
    line-height: 48px;
  }
</style>
